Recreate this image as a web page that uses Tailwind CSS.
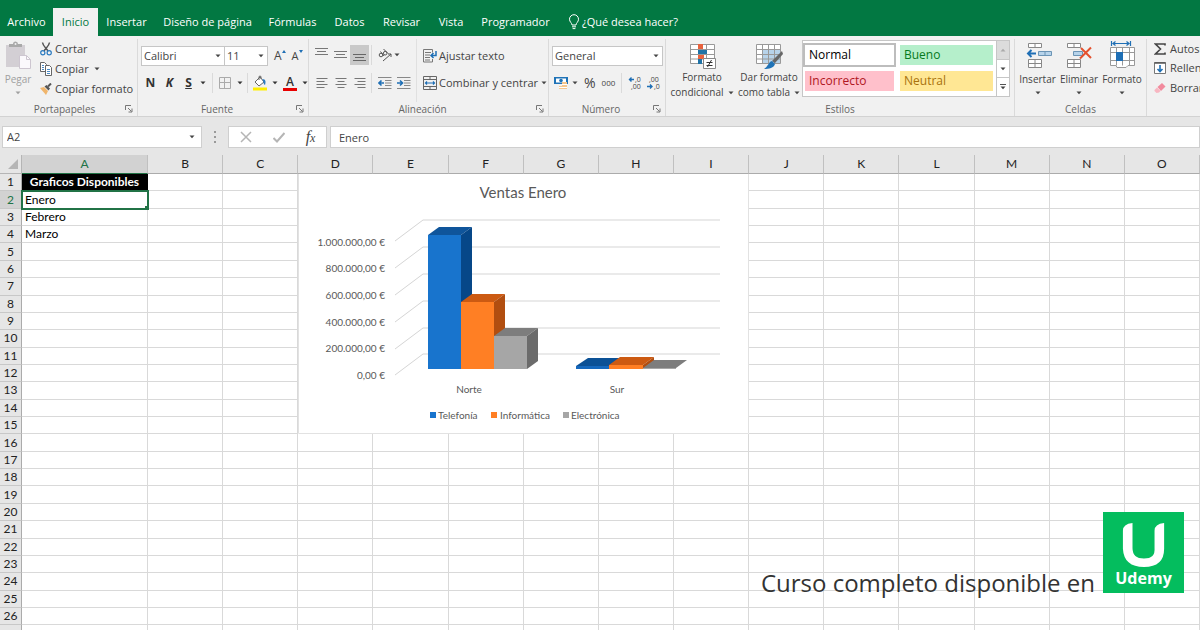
<!DOCTYPE html>
<html lang="es">
<head>
  <meta charset="UTF-8">
  <meta name="viewport" content="width=device-width, initial-scale=1.0">
  <title>Ventas - Excel</title>
  <script src="https://cdn.jsdelivr.net/npm/@tailwindcss/browser@4"></script>
</head>
<body class="h-screen overflow-hidden flex flex-col bg-[#e6e6e6] font-['Open_Sans',sans-serif] text-[11px] leading-4 text-[#444]">

  <!-- Shared symbols -->
  <svg class="hidden">
    <symbol id="caret" viewBox="0 0 6 4"><path d="M0.5 0.5h5L3 3.3z" fill="currentColor"/></symbol>
    <symbol id="launcher" viewBox="0 0 8 8"><path d="M0.5 5V0.5H6M3 3l3.5 3.5M7 3.5V7H3.5" fill="none" stroke="#777"/></symbol>
  </svg>

  <!-- Tabs -->
  <nav class="h-9 shrink-0 bg-[#027842] text-white flex items-end whitespace-nowrap">
    <a href="#" class="w-[53px] h-7 flex items-center justify-center">Archivo</a>
    <a href="#" class="w-[45px] h-7 flex items-center justify-center bg-[#f1f1f1] text-[#027842]">Inicio</a>
    <a href="#" class="w-[57px] h-7 flex items-center justify-center">Insertar</a>
    <a href="#" class="w-[105px] h-7 flex items-center justify-center">Diseño de página</a>
    <a href="#" class="w-[65px] h-7 flex items-center justify-center">Fórmulas</a>
    <a href="#" class="w-[49px] h-7 flex items-center justify-center">Datos</a>
    <a href="#" class="w-[55px] h-7 flex items-center justify-center">Revisar</a>
    <a href="#" class="w-[44px] h-7 flex items-center justify-center">Vista</a>
    <a href="#" class="w-[85px] h-7 flex items-center justify-center">Programador</a>
    <a href="#" class="h-7 pl-2.5 flex items-center gap-0.5">
      <svg class="w-3 h-4" viewBox="0 0 12 16" fill="none" stroke="#fff"><path d="M4 11C4 9 1.5 8 1.5 5.2a4.4 4.4 0 0 1 9 0C10.5 8 8 9 8 11zM4 12.8h4M4.6 14.6h2.800"/></svg>
      ¿Qué desea hacer?
    </a>
  </nav>

  <!-- Ribbon -->
  <section class="h-[81px] shrink-0 bg-[#f1f1f1] border-b border-[#d2d2d2] flex pt-[3px] overflow-hidden whitespace-nowrap">

    <!-- Portapapeles -->
    <div class="w-[138px] shrink-0 border-r border-[#dadada] flex flex-col">
      <div class="h-[63px] shrink-0 flex">
        <button class="w-9 h-[62px] mr-0.5 flex flex-col items-center text-[#a0a0a0] text-[10px] leading-4">
          <svg class="w-7 h-8 shrink-0" viewBox="0 0 28 32">
            <path d="M2 6h19v22H2z" fill="#d3cfd4"/>
            <path d="M5 8h13V5h-4a2.500 2.500 0 0 0-5 0H5z" fill="#a9a9a9"/><circle cx="11.500" cy="5" r="1" fill="#f1f1f1"/>
            <path d="M15.500 16.500h7l4 4v9h-11z" fill="#fbf9fc" stroke="#cdc6d0"/><path d="M22.500 16.500v4h4" fill="none" stroke="#cdc6d0"/>
          </svg>
          Pegar
          <svg class="w-1.5 h-1 mt-1"><use href="#caret"/></svg>
        </button>
        <div class="pl-0.5 flex flex-col">
          <button class="h-5 flex items-center gap-[3px]">
            <svg class="w-3 h-3.5" viewBox="0 0 12 14" fill="none"><path d="M2.500 0.500C3 4 6 6 8 9M9.500 0.500C9 4 6 6 4 9" stroke="#555" stroke-width="1.500"/><circle cx="2.800" cy="10.800" r="2.100" stroke="#2b7bc0" stroke-width="1.200"/><circle cx="9.200" cy="10.800" r="2.100" stroke="#2b7bc0" stroke-width="1.200"/></svg>
            Cortar
          </button>
          <button class="h-5 flex items-center gap-[3px]">
            <svg class="w-3 h-3.5" viewBox="0 0 12 14" fill="#fff" stroke="#666"><path d="M0.500 0.500h4l2 2v7h-6z"/><path d="M5.500 3.500h4l2 2v8h-6z"/><path d="M2 3.500h2M2 5.500h2M2 7.500h2M7 7.500h3M7 9.500h3M7 11.500h3" stroke="#4a8ac4"/></svg>
            Copiar
            <svg class="w-1.5 h-1 ml-0.5"><use href="#caret"/></svg>
          </button>
          <button class="h-5 flex items-center gap-[3px]">
            <svg class="w-3 h-3" viewBox="0 0 12 12"><path d="M0 5l4-1 4 4-2 4z" fill="#f0b56c"/><path d="M4.500 3.500L6.500 2l3.500 3.500L8.500 7.500z" fill="#555"/><path d="M8 3.500l3-3" stroke="#555" stroke-width="2"/></svg>
            Copiar formato
          </button>
        </div>
      </div>
      <div class="flex items-center text-[10px] leading-[14px] text-[#666] pl-1 pr-1">
        <span class="flex-1 text-center">Portapapeles</span>
        <svg class="w-2 h-2"><use href="#launcher"/></svg>
      </div>
    </div>

    <!-- Fuente -->
    <div class="w-[171px] shrink-0 border-r border-[#dadada] flex flex-col">
      <div class="h-[63px] shrink-0 pt-[7px] pl-[3px] flex flex-col gap-[7px]">
        <div class="flex items-center">
          <div class="relative w-[84px]">
            <select aria-label="Fuente" class="appearance-none block w-full h-5 pl-0.5 bg-white border border-[#c6c6c6] leading-4"><option>Calibri</option></select>
            <svg class="absolute right-1 top-2 w-1.5 h-1"><use href="#caret"/></svg>
          </div>
          <div class="relative w-11 -ml-px">
            <select aria-label="Tamaño de fuente" class="appearance-none block w-full h-5 pl-0.5 bg-white border border-[#c6c6c6] leading-4"><option>11</option></select>
            <svg class="absolute right-1 top-2 w-1.5 h-1"><use href="#caret"/></svg>
          </div>
          <button aria-label="Aumentar tamaño" class="ml-1.5 flex items-start text-xs">A<svg class="w-1 h-1 mt-0.5" viewBox="0 0 4 4"><path d="M0 3l2-3 2 3z" fill="#1f6fb5"/></svg></button>
          <button aria-label="Disminuir tamaño" class="ml-1.5 flex items-start text-[11px]">A<svg class="w-1 h-1 mt-0.5" viewBox="0 0 4 4"><path d="M0 0l2 3 2-3z" fill="#1f6fb5"/></svg></button>
        </div>
        <div class="h-5 flex items-center text-xs text-[#333]">
          <button class="w-[19px] font-bold">N</button>
          <button class="w-[19px] font-bold italic">K</button>
          <button class="w-[19px] font-bold underline">S</button>
          <svg class="w-1.5 h-1 ml-0.5"><use href="#caret"/></svg>
          <span class="w-px h-5 bg-[#dadada] ml-1.5"></span>
          <button aria-label="Bordes" class="ml-1.5"><svg class="w-3 h-3 block" viewBox="0 0 12 12" fill="none" stroke="#aaa"><path d="M0.500 0.500h11v11h-11zM5.500 0.500v11M0.500 5.500h11"/></svg></button>
          <svg class="w-1.5 h-1 ml-1.5"><use href="#caret"/></svg>
          <span class="w-px h-5 bg-[#dadada] ml-1"></span>
          <button aria-label="Color de relleno" class="ml-1"><svg class="w-4 h-4 block" viewBox="0 0 16 16"><path d="M3 7l5-5 4 5-5 4z" fill="#fff" stroke="#666"/><path d="M7 5V1.500a1.500 1.500 0 0 1 2 0V4" fill="none" stroke="#666"/><path d="M10 4c4 0 4 3 3 6-2-1-1-4-3-6z" fill="#2b7bc0"/><path d="M1 12.500h14v3H1z" fill="#ffee00"/></svg></button>
          <svg class="w-1.5 h-1 ml-1"><use href="#caret"/></svg>
          <button aria-label="Color de fuente" class="ml-1 w-4 flex flex-col items-center leading-3 font-semibold">A<span class="w-3.5 h-[3px] bg-[#e80000]"></span></button>
          <svg class="w-1.5 h-1 ml-1"><use href="#caret"/></svg>
        </div>
      </div>
      <div class="flex items-center text-[10px] leading-[14px] text-[#666] pr-1">
        <span class="flex-1 text-center">Fuente</span>
        <svg class="w-2 h-2"><use href="#launcher"/></svg>
      </div>
    </div>

    <!-- Alineación -->
    <div class="w-[240px] shrink-0 border-r border-[#dadada] flex flex-col">
      <div class="h-[63px] shrink-0 flex">
        <div class="w-[108px] border-r border-[#e0e0e0] pt-[6px] pl-[3px] flex flex-col gap-2">
          <div class="h-5 flex items-center">
            <button aria-label="Alinear arriba" class="w-[19px] h-5 flex justify-center"><svg class="w-[19px] h-5" viewBox="0 0 19 20" stroke="#777"><path d="M3 3.500h13M5 6.500h9M3 9.500h13"/></svg></button>
            <button aria-label="Alinear en el medio" class="w-[19px] h-5 flex justify-center"><svg class="w-[19px] h-5" viewBox="0 0 19 20" stroke="#777"><path d="M3 6.500h13M5 9.500h9M3 12.500h13"/></svg></button>
            <button aria-label="Alinear abajo" class="w-[19px] h-5 flex justify-center bg-[#c9c9c9]"><svg class="w-[19px] h-5" viewBox="0 0 19 20" stroke="#666"><path d="M3 9.500h13M5 12.500h9M3 15.500h13"/></svg></button>
            <span class="w-px h-5 bg-[#dadada] ml-0.5"></span>
            <button aria-label="Orientación" class="ml-1.5"><svg class="w-3.5 h-3.5 block" viewBox="0 0 14 14" fill="none" stroke="#555"><circle cx="3" cy="7" r="1.800"/><path d="M2.500 3.500L6 8M5.500 1l4.500 4.500"/><circle cx="7.200" cy="5.200" r="1.800"/><path d="M5 13l8-7M13 9V6h-3"/></svg></button>
            <svg class="w-1.5 h-1 ml-0.5"><use href="#caret"/></svg>
          </div>
          <div class="h-5 flex items-center">
            <button aria-label="Alinear a la izquierda" class="w-[19px] flex justify-center"><svg class="w-3 h-3" viewBox="0 0 12 12" stroke="#777"><path d="M0.500 1.500h11M0.500 4.500h8M0.500 7.500h11M0.500 10.500h8"/></svg></button>
            <button aria-label="Centrar" class="w-[19px] flex justify-center"><svg class="w-3 h-3" viewBox="0 0 12 12" stroke="#777"><path d="M0.500 1.500h11M2.500 4.500h7M0.500 7.500h11M2.500 10.500h7"/></svg></button>
            <button aria-label="Alinear a la derecha" class="w-[19px] flex justify-center"><svg class="w-3 h-3" viewBox="0 0 12 12" stroke="#777"><path d="M0.500 1.500h11M3.500 4.500h8M0.500 7.500h11M3.500 10.500h8"/></svg></button>
            <span class="w-px h-5 bg-[#dadada] ml-0.5"></span>
            <button aria-label="Disminuir sangría" class="ml-1.5"><svg class="w-3.5 h-3 block" viewBox="0 0 14 12"><path d="M0 0.500h13.500M7 3.500h6.500M7 6h6.500M7 8.500h6.500M0 11.500h13.500" stroke="#888"/><path d="M6 6H1.500M3.500 3.500L1 6l2.500 2.500" fill="none" stroke="#1f6fb5" stroke-width="1.600"/></svg></button>
            <button aria-label="Aumentar sangría" class="ml-[5px]"><svg class="w-3.5 h-3 block" viewBox="0 0 14 12"><path d="M0 0.500h13.500M7 3.500h6.500M7 6h6.500M7 8.500h6.500M0 11.500h13.500" stroke="#888"/><path d="M0 6h5M3 3.500L5.500 6 3 8.500" fill="none" stroke="#1f6fb5" stroke-width="1.600"/></svg></button>
          </div>
        </div>
        <div class="pt-[7px] pl-[6px] flex flex-col gap-[7px]">
          <button class="h-5 flex items-center gap-0.5">
            <svg class="w-3.5 h-3.5" viewBox="0 0 14 14" fill="none"><path d="M0.500 0.500h9v3M0.500 0.500v12.500h9v-3M2 3.500h6M2 6h5M2 8.500h5M2 11h5" stroke="#777"/><path d="M13 2v4.500H8.500M10.500 4L8 6.500 10.500 9" stroke="#1f6fb5" stroke-width="1.500"/></svg>
            Ajustar texto
          </button>
          <button class="h-5 flex items-center gap-0.5">
            <svg class="w-3.5 h-3.5" viewBox="0 0 14 14" fill="none"><path d="M0.500 0.500h13v13H0.500zM0.500 3.500h13M0.500 10.500h13M7 0.500v3M7 10.500v3" stroke="#666"/><path d="M2.500 7h9M4 5.500L2.500 7 4 8.500M10 5.500L11.500 7 10 8.500" stroke="#1f6fb5" stroke-width="1.200"/></svg>
            Combinar y centrar
            <svg class="w-1.5 h-1 ml-px"><use href="#caret"/></svg>
          </button>
        </div>
      </div>
      <div class="flex items-center text-[10px] leading-[14px] text-[#666] pr-1">
        <span class="flex-1 text-center">Alineación</span>
        <svg class="w-2 h-2"><use href="#launcher"/></svg>
      </div>
    </div>

    <!-- Número -->
    <div class="w-[117px] shrink-0 border-r border-[#dadada] flex flex-col">
      <div class="h-[63px] shrink-0 pt-[7px] pl-[3px] flex flex-col gap-[7px]">
        <div class="relative w-[111px]">
          <select aria-label="Formato de número" class="appearance-none block w-full h-5 pl-0.5 bg-white border border-[#c6c6c6] leading-4"><option>General</option></select>
          <svg class="absolute right-1 top-2 w-1.5 h-1"><use href="#caret"/></svg>
        </div>
        <div class="h-5 flex items-center">
          <button aria-label="Moneda" class="ml-0.5"><svg class="w-3.5 h-3.5 block" viewBox="0 0 14 14"><path d="M0 1h14v7H0z" fill="#1f73b7"/><path d="M2 2.500h10v4H2z" fill="#fff"/><circle cx="7" cy="4.500" r="1.800" fill="#1f73b7"/><path d="M8 6h5v7H5V10h3z" fill="#f5c68d"/><path d="M8 8.500h5M5 11.500h8" stroke="#fff"/></svg></button>
          <svg class="w-1.5 h-1 ml-1"><use href="#caret"/></svg>
          <button class="ml-1.5 text-sm leading-4">%</button>
          <button class="ml-1.5 text-[8px]">000</button>
          <span class="w-px h-5 bg-[#dadada] ml-1.5"></span>
          <button aria-label="Aumentar decimales" class="ml-1.5"><svg class="w-3.5 h-3.5 block" viewBox="0 0 14 14" font-size="7" fill="#444"><text x="7" y="6">,0</text><text x="3" y="13">,00</text><path d="M6 3.500H1.500M3.500 1.500l-2 2 2 2" fill="none" stroke="#1f6fb5" stroke-width="1.400"/></svg></button>
          <button aria-label="Disminuir decimales" class="ml-[5px]"><svg class="w-3.5 h-3.5 block" viewBox="0 0 14 14" font-size="7" fill="#444"><text x="2" y="6">,00</text><text x="7" y="13">,0</text><path d="M0 10.500h5M3 8.500l2 2-2 2" fill="none" stroke="#1f6fb5" stroke-width="1.400"/></svg></button>
        </div>
      </div>
      <div class="flex items-center text-[10px] leading-[14px] text-[#666] pr-1">
        <span class="flex-1 text-center">Número</span>
        <svg class="w-2 h-2"><use href="#launcher"/></svg>
      </div>
    </div>

    <!-- Estilos -->
    <div class="w-[349px] shrink-0 border-r border-[#dadada] flex flex-col">
      <div class="h-[63px] shrink-0 flex">
        <button class="w-[72px] h-[62px] pt-1 flex flex-col items-center text-[10px] leading-[15px]">
          <svg class="w-7 h-[27px] shrink-0" viewBox="0 0 28 27">
            <path d="M2.500 1.500h24v19h-24zM2.500 6.500h24M2.500 11.500h24M2.500 16h24M10.500 1.500v19M18.500 1.500v19" fill="#fff" stroke="#999"/>
            <path d="M10 1h5v5h-5zM10 12h6v4h-6z" fill="#e8623d"/><path d="M10 7h9v4h-9zM10 16h4v5h-4z" fill="#1f73a7"/>
            <path d="M15.500 15.500h12v10h-12z" fill="#fff" stroke="#888"/><path d="M18.500 19.500h6M18.500 22.500h6M23.500 17l-4 7" stroke="#333"/>
          </svg>
          <span>Formato</span>
          <span class="flex items-center gap-1">condicional <svg class="w-1.5 h-1"><use href="#caret"/></svg></span>
        </button>
        <button class="w-[62px] h-[62px] pt-1 flex flex-col items-center text-[10px] leading-[15px]">
          <svg class="w-7 h-[27px] shrink-0" viewBox="0 0 28 27">
            <path d="M1.500 1.500h24v19h-24z" fill="#fff"/><path d="M8 6h17v14H8z" fill="#b7d3ea"/>
            <path d="M1.500 1.500h24v19h-24zM1.500 6.500h24M1.500 11.500h24M1.500 16h24M7.500 1.500v19M13.500 1.500v19M19.500 1.500v19" fill="none" stroke="#999"/>
            <path d="M27 8l1 3-8 9-3-2z" fill="#666"/><path d="M17 18l3 3c-1 4-6 5-11 5 4-2 4-7 8-8z" fill="#1f73b7"/>
          </svg>
          <span>Dar formato</span>
          <span class="flex items-center gap-1">como tabla <svg class="w-1.5 h-1"><use href="#caret"/></svg></span>
        </button>
        <div class="ml-[2px] mt-px w-[208px] h-[57px] border border-[#c6c6c6] bg-white flex text-xs">
          <div class="flex-1 grid grid-cols-2 grid-rows-[24px_20px] content-start gap-x-1 gap-y-1 pt-[2px] pr-[3px]">
            <button class="border-2 border-[#bdbdbd] pl-1 text-left leading-4 text-black">Normal</button>
            <button class="my-[2px] bg-[#b5efcb] pl-1 text-left text-[#067a1c]">Bueno</button>
            <button class="mx-[2px] bg-[#ffc0cb] pl-1 text-left text-[#b01722]">Incorrecto</button>
            <button class="bg-[#ffe794] pl-1 text-left text-[#a8720c]">Neutral</button>
          </div>
          <div class="w-[13px] border-l border-[#c6c6c6] flex flex-col">
            <button aria-label="Subir" class="flex-1 flex items-center justify-center bg-[#dcdcdc] text-[#aaa]"><svg class="w-1.5 h-1 rotate-180"><use href="#caret"/></svg></button>
            <button aria-label="Bajar" class="flex-1 flex items-center justify-center border-y border-[#c6c6c6]"><svg class="w-1.5 h-1"><use href="#caret"/></svg></button>
            <button aria-label="Más estilos" class="flex-1 flex flex-col items-center justify-center gap-px"><span class="w-1.5 h-px bg-[#555]"></span><svg class="w-1.5 h-1"><use href="#caret"/></svg></button>
          </div>
        </div>
      </div>
      <div class="text-center text-[10px] leading-[14px] text-[#666]">Estilos</div>
    </div>

    <!-- Celdas -->
    <div class="w-[132px] shrink-0 border-r border-[#dadada] flex flex-col">
      <div class="h-[63px] shrink-0 pl-0.5 flex">
        <button class="w-[41px] h-[62px] flex flex-col items-center text-[10px] leading-4">
          <svg class="w-7 h-8 shrink-0" viewBox="0 0 28 32" fill="#fff" stroke="#888">
            <path d="M4.500 4.500h13v4h-13zM11 4.500v4M4.500 20.500h13v8h-13zM4.500 24.500h13M11 20.500v8"/><path d="M14.500 12.500h13v4h-13zM21 12.500v4" fill="#b7d3ea" stroke="#6b94b5"/>
            <path d="M12 14.500H4M7.500 11L4 14.500 7.500 18" fill="none" stroke="#1f6fb5" stroke-width="2"/>
          </svg>
          Insertar
          <svg class="w-1.5 h-1 mt-1"><use href="#caret"/></svg>
        </button>
        <button class="w-[42px] h-[62px] flex flex-col items-center text-[10px] leading-4">
          <svg class="w-7 h-8 shrink-0" viewBox="0 0 28 32" fill="#fff" stroke="#888">
            <path d="M2.500 4.500h13v4h-13zM9 4.500v4M2.500 20.500h13v8h-13zM2.500 24.500h13M9 20.500v8"/><path d="M8.500 12.500h9v4h-9z" fill="#b7d3ea" stroke="#6b94b5"/>
            <path d="M16 9l10 10M26 8.500L15 19.500" fill="none" stroke="#e4512e" stroke-width="2"/>
          </svg>
          Eliminar
          <svg class="w-1.5 h-1 mt-1"><use href="#caret"/></svg>
        </button>
        <button class="w-[44px] h-[62px] flex flex-col items-center text-[10px] leading-4">
          <svg class="w-7 h-8 shrink-0" viewBox="0 0 28 32" fill="#fff" stroke="#999">
            <path d="M2.500 8.500h24v18H20l-2 2H9l-1-2H2.500zM2.500 13.500h24M2.500 21.500h24M8.500 8.500v18M14.500 8.500v18M21.500 8.500v18"/><path d="M8 13h7v9H8z" fill="#1f6fb5" stroke="none"/>
            <path d="M3.500 2v5M22.500 2v5M5 4.500h16M7.500 2.500l-2.500 2 2.500 2M18.500 2.500l2.500 2-2.500 2" fill="none" stroke="#1f6fb5" stroke-width="1.200"/>
          </svg>
          Formato
          <svg class="w-1.5 h-1 mt-1"><use href="#caret"/></svg>
        </button>
      </div>
      <div class="text-center text-[10px] leading-[14px] text-[#666]">Celdas</div>
    </div>

    <!-- Modificar -->
    <div class="pl-[7px] flex flex-col shrink-0">
      <button class="h-[19px] flex items-center gap-1">
        <svg class="w-3 h-3" viewBox="0 0 12 12" fill="none" stroke="#444" stroke-width="1.600"><path d="M11 2.500V1H1.500l5 5-5 5H11V9.500"/></svg>
        Autosuma
      </button>
      <button class="h-5 flex items-center gap-1">
        <svg class="w-3 h-3" viewBox="0 0 12 12"><path d="M0.500 0.500h11v11H0.500z" fill="#fff" stroke="#777"/><path d="M0.500 1h11" stroke="#555" stroke-width="1.500"/><path d="M6 3v6.500M3.500 7L6 9.500 8.500 7" fill="none" stroke="#1f6fb5" stroke-width="1.600"/></svg>
        Rellenar
      </button>
      <button class="h-5 flex items-center gap-1">
        <svg class="w-3 h-3" viewBox="0 0 12 12"><path d="M3.500 5L8 1l3.500 3.500L7 9z" fill="#f28a9d"/><path d="M3 5.500L6.500 9 5 10.500 2.500 11 0.500 9V8z" fill="#f8b6c1"/></svg>
        Borrar
      </button>
    </div>
  </section>

  <!-- Formula bar -->
  <section class="h-[38px] shrink-0 pt-[9px] pl-0.5 flex items-start">
    <div class="w-[200px] h-[22px] bg-white border border-[#cfcfcf] flex items-center pr-1.5">
      <input aria-label="Cuadro de nombres" value="A2" class="flex-1 min-w-0 pl-1 outline-none">
      <button aria-label="Lista de nombres"><svg class="w-1.5 h-1 block"><use href="#caret"/></svg></button>
    </div>
    <svg class="w-[26px] h-[22px]" viewBox="0 0 26 22" fill="#999"><path d="M12 5h2v2h-2zM12 10h2v2h-2zM12 15h2v2h-2z"/></svg>
    <div class="w-[99px] h-[22px] bg-white border border-[#cfcfcf] flex items-center justify-around">
      <button aria-label="Cancelar"><svg class="w-3 h-3 block" viewBox="0 0 12 12" stroke="#b5b5b5" stroke-width="1.500"><path d="M1 1l10 10M11 1L1 11"/></svg></button>
      <button aria-label="Introducir"><svg class="w-3 h-3 block" viewBox="0 0 12 12" fill="none" stroke="#b5b5b5" stroke-width="2"><path d="M0.500 7l3.500 3.500L11.500 2"/></svg></button>
      <button class="font-['Liberation_Serif',serif] italic text-base leading-4">f<span class="text-xs">x</span></button>
    </div>
    <input aria-label="Barra de fórmulas" value="Enero" class="ml-[3px] flex-1 min-w-0 h-[22px] bg-white border border-[#cfcfcf] pl-2 outline-none">
  </section>

  <!-- Sheet -->
  <main class="relative flex-1 min-h-0 overflow-hidden bg-white">
    <table class="w-full h-[488px] table-fixed border-separate border-spacing-0 text-xs leading-4 text-[#222] font-[Lato,sans-serif]">
      <thead>
        <tr id="letters" class="h-[19px]"></tr>
      </thead>
      <tbody id="rows"></tbody>
    </table>

    <!-- Chart -->
    <svg class="absolute left-[298px] top-[19px] w-[451px] h-[260px] font-[Lato,sans-serif]" viewBox="0 0 451 260" fill="#595959" font-size="10">
      <path d="M0 0h451v260H0z" fill="#fff"/>
      <path d="M0.500 0v259.500h450V0" fill="none" stroke="#e2e2e2"/>
      <text x="225" y="24" text-anchor="middle" font-size="15">Ventas Enero</text>
      <g fill="none" stroke="#d5d5d5">
        <path d="M97 67l28-21h297"/><path d="M97 94l28-21h297"/><path d="M97 121l28-21h297"/>
        <path d="M97 148l28-21h297"/><path d="M97 175l28-21h297"/><path d="M97 201l28-21h297"/>
      </g>
      <g text-anchor="end">
        <text x="87" y="72">1.000.000,00 €</text><text x="87" y="98">800.000,00 €</text><text x="87" y="125">600.000,00 €</text>
        <text x="87" y="152">400.000,00 €</text><text x="87" y="178">200.000,00 €</text><text x="87" y="205">0,00 €</text>
      </g>
      <!-- Norte -->
      <path d="M130 61h33v134h-33z" fill="#1874cd"/><path d="M130 61l11-8h33l-11 8z" fill="#0f559b"/><path d="M163 61l11-8v134l-11 8z" fill="#064788"/>
      <path d="M163 128h33v67h-33z" fill="#ff7f24"/><path d="M163 128l11-8h33l-11 8z" fill="#cc5a12"/><path d="M196 128l11-8v67l-11 8z" fill="#b14e10"/>
      <path d="M196 162h33v33h-33z" fill="#a6a6a6"/><path d="M196 162l11-8h33l-11 8z" fill="#7d7d7d"/><path d="M229 162l11-8v33l-11 8z" fill="#6b6b6b"/>
      <!-- Sur -->
      <path d="M278 192h33v3h-33z" fill="#1568bd"/><path d="M278 192l12-8h33l-12 8z" fill="#0b5196"/>
      <path d="M311 191h34v4h-34z" fill="#ff7f24"/><path d="M311 191l11-8h34l-11 8z" fill="#cc5a12"/><path d="M345 191l11-8v4l-11 8z" fill="#b14e10"/>
      <path d="M345 194l11-8h33l-11 8z" fill="#7d7d7d"/><path d="M345 194h33v1h-33z" fill="#a6a6a6"/>
      <text x="171" y="219" text-anchor="middle">Norte</text><text x="319" y="219" text-anchor="middle">Sur</text>
      <path d="M132 238h6v6h-6z" fill="#1874cd"/><text x="140" y="245">Telefonía</text>
      <path d="M193 238h6v6h-6z" fill="#ff7f24"/><text x="202" y="245">Informática</text>
      <path d="M265 238h6v6h-6z" fill="#a6a6a6"/><text x="273" y="245">Electrónica</text>
    </svg>

    <!-- Banner -->
    <div class="absolute right-4 top-[357px] flex items-end gap-2">
      <p class="text-2xl leading-5 font-medium text-[#333] whitespace-nowrap">Curso completo disponible en</p>
      <div class="w-[81px] h-[81px] bg-[#04bd5e] text-white flex flex-col items-center pt-2.5">
        <svg class="w-11 h-[46px] shrink-0" viewBox="0 0 44 48"><path d="M0 9Q0 2 10 1v26q0 11 12 11t11-11V9q0-7 10-8v27q0 19-21 19T0 28z" fill="#fff"/></svg>
        <span class="text-base leading-5 font-bold">Udemy</span>
      </div>
    </div>
  </main>

  <script>
    const letters = "ABCDEFGHIJKLMNO".split("");
    const column = { 1: "Graficos Disponibles", 2: "Enero", 3: "Febrero", 4: "Marzo" };

    let head = '<th class="w-[22px] bg-[#e6e6e6] border-b border-r border-[#b5b5b5] p-0"><svg class="w-3 h-3 ml-auto mr-0.5" viewBox="0 0 12 12"><path d="M11 1v10H1z" fill="#b5b5b5"/></svg></th>';
    letters.forEach((l) => {
      head += l === "A"
        ? '<th scope="col" class="w-[126px] p-0 font-normal text-[#217346] bg-[#d2d2d2] border-b border-r border-b-[#217346] border-r-[#c0c0c0]">A</th>'
        : `<th scope="col" class="p-0 font-normal bg-[#e6e6e6] border-b border-r border-b-[#ababab] border-r-[#c0c0c0]">${l}</th>`;
    });
    document.getElementById("letters").innerHTML = head;

    let body = "";
    for (let r = 1; r <= 27; r++) {
      const th = r === 2
        ? "p-0 font-normal text-[#217346] bg-[#d2d2d2] border-b border-r border-b-[#c8c8c8] border-r-[#217346]"
        : "p-0 font-normal bg-[#e6e6e6] border-b border-r border-b-[#c8c8c8] border-r-[#ababab]";
      let first = "p-0 pl-[3px] border-b border-r border-[#d9d9d9] whitespace-nowrap text-black";
      if (r === 1) first = "p-0 bg-black text-white font-bold text-center whitespace-nowrap border-b border-r border-black";
      if (r === 2) first = "relative p-0 pl-[3px] border-b border-r border-[#d9d9d9] text-black outline-2 -outline-offset-1 outline-[#217346]";
      const handle = r === 2 ? '<span class="absolute -right-0.5 -bottom-0.5 w-1 h-1 bg-[#217346]"></span>' : "";
      body += `<tr><th scope="row" class="${th}">${r}</th><td class="${first}">${column[r] || ""}${handle}</td>`;
      for (let c = 1; c < letters.length; c++) body += '<td class="p-0 border-b border-r border-[#d9d9d9]"></td>';
      body += "</tr>";
    }
    document.getElementById("rows").innerHTML = body;
  </script>
</body>
</html>
